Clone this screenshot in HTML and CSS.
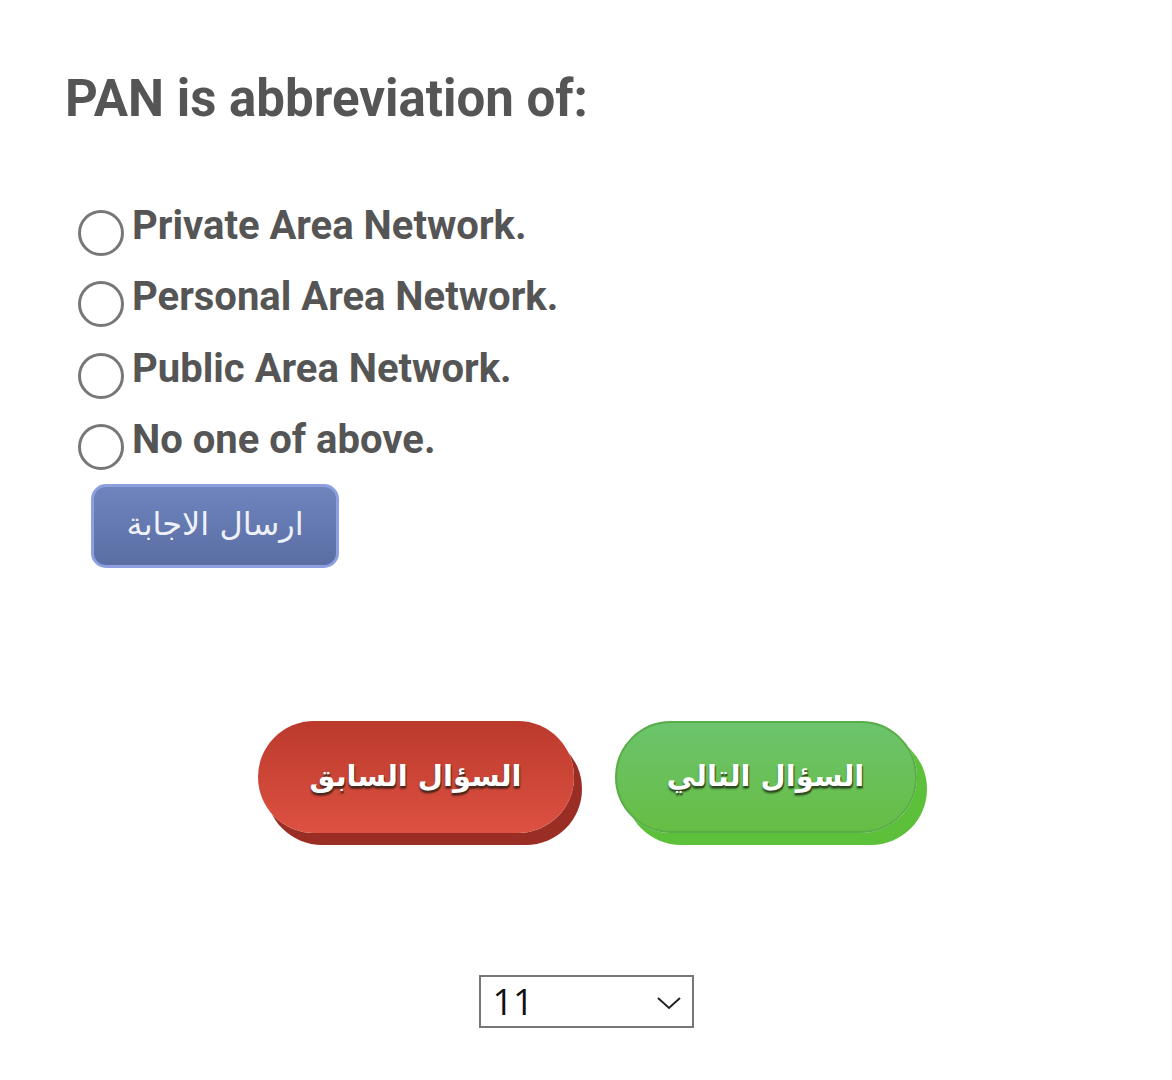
FILE: index.html
```html
<!DOCTYPE html>
<html lang="en">
<head>
<meta charset="utf-8">
<link rel="stylesheet" href="styles.css">
</head>
<body>
<div class="page">
  <h1 class="question">PAN is abbreviation of:</h1>
  <ul class="options">
    <li class="option"><span class="radio"></span><span class="label">Private Area Network.</span></li>
    <li class="option"><span class="radio"></span><span class="label">Personal Area Network.</span></li>
    <li class="option"><span class="radio"></span><span class="label">Public Area Network.</span></li>
    <li class="option"><span class="radio"></span><span class="label">No one of above.</span></li>
  </ul>
  <div class="submit-row"><button class="submit" dir="rtl">ارسال الاجابة</button></div>
  <div class="nav">
    <button class="pill pill-red" dir="rtl">السؤال السابق</button>
    <button class="pill pill-green" dir="rtl">السؤال التالي</button>
  </div>
  <div class="select-row">
    <div class="select"><span class="select-value">11</span>
      <svg class="chev" width="26" height="16" viewBox="0 0 26 16"><path d="M2 3 L13 13 L24 3" fill="none" stroke="#222" stroke-width="2"/></svg>
    </div>
  </div>
</div>
</body>
</html>
```
FILE: styles.css
```css
* { box-sizing: border-box; }
body { margin: 0; background: #fff; font-family: Roboto, "Liberation Sans", sans-serif; }
.page { width: 1172px; height: 1080px; padding-top: 70px; }
.question { margin: 0 0 0 65px; font-size: 51px; font-weight: 700; color: #555; line-height: 58px; }
.options { list-style: none; margin: 62px 0 0 78px; padding: 0; }
.option { display: flex; align-items: center; height: 71.5px; }
.radio { width: 46px; height: 46px; border: 3px solid #777; border-radius: 50%; margin-top: 14px; flex: none; }
.label { font-size: 40px; font-weight: 700; color: #555; margin-left: 8px; line-height: 40px; }
.submit-row { margin: 8px 0 0 91px; }
.submit { width: 248px; height: 84px; border-radius: 15px; border: 3px solid #8e9fe0; background: linear-gradient(#6f84bd, #5a6ea4); color: #eef1f8; font-family: "DejaVu Sans", sans-serif; font-size: 32px; padding: 0 0 4px; }
.nav { display: flex; justify-content: center; gap: 41px; margin-top: 153px; padding-left: 2px; }
.pill { height: 112px; border-radius: 56px; border: 0; font-family: "DejaVu Sans", sans-serif; font-weight: 700; font-size: 29px; color: #fff; text-shadow: 1px 2px 1px #4a2a20, 0 3px 2px rgba(0,0,0,0.45); padding: 0 0 2px; }
.pill-red { width: 316px; background: linear-gradient(#bb3a2c, #dd5141); box-shadow: 8px 12px 0 #9a2e24; }
.pill-green { width: 302px; background: linear-gradient(#6cc46d, #67bd44); border: 2px solid #58ad48; box-shadow: 10px 12px 0 #5cc03a; text-shadow: 1px 2px 1px #2f4a22, 0 3px 2px rgba(0,0,0,0.4); }
.select-row { display: flex; justify-content: center; margin-top: 142px; }
.select { width: 215px; height: 53px; border: 2px solid #777; display: flex; align-items: center; justify-content: space-between; padding: 0 10px 0 12px; }
.select-value { font-family: "Open Sans", sans-serif; font-size: 36px; color: #111; line-height: 1; }
.chev { margin-top: 2px; }
```
